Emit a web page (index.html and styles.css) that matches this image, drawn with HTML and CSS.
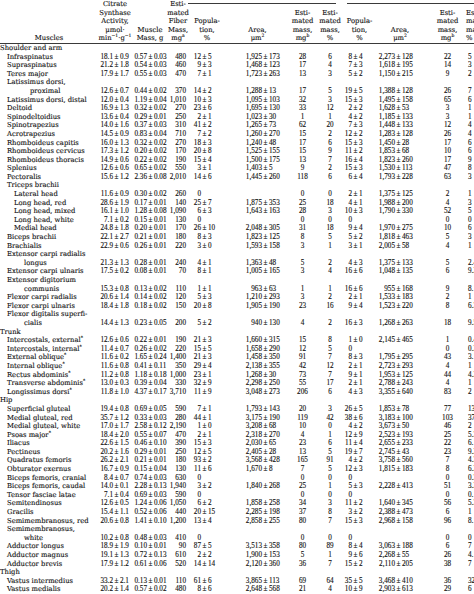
FILE: index.html
```html
<!DOCTYPE html>
<html>
<head>
<meta charset="utf-8">
<link rel="stylesheet" href="styles.css">
</head>
<body>
<table class="tbl">
<colgroup>
<col class="w1"><col class="w2"><col class="w3"><col class="w4"><col class="w5"><col class="w6"><col class="w7"><col class="w8"><col class="w9"><col class="w10"><col class="w11"><col class="w12">
</colgroup>
<thead>
<tr class="spanrow">
<th class="hd" rowspan="2"><div class="h"><span>Muscles</span></div></th>
<th class="hd" rowspan="2"><div class="h"><span>Citrate</span><span>Synthase</span><span>Activity,</span><span>μmol·</span><span>min<sup>−1</sup>·g<sup>−1</sup></span></div></th>
<th class="hd" rowspan="2"><div class="h"><span>Muscle</span><span>Mass, g</span></div></th>
<th class="hd" rowspan="2"><div class="h"><span>Esti-</span><span>mated</span><span>Fiber</span><span>Mass,</span><span>mg<sup>a</sup></span></div></th>
<th class="sp" colspan="4"><div class="rule r1"></div></th>
<th class="sp" colspan="4"><div class="rule r2"></div></th>
</tr>
<tr>
<th class="hd"><div class="h"><span>Popula-</span><span>tion,</span><span>%</span></div></th>
<th class="hd"><div class="h"><span>Area,</span><span>μm<sup>2</sup></span></div></th>
<th class="hd"><div class="h"><span>Esti-</span><span>mated</span><span>mass,</span><span>mg<sup>b</sup></span></div></th>
<th class="hd"><div class="h"><span>Esti-</span><span>mated</span><span>mass,</span><span>%</span></div></th>
<th class="hd"><div class="h"><span>Popula-</span><span>tion,</span><span>%</span></div></th>
<th class="hd"><div class="h"><span>Area,</span><span>μm<sup>2</sup></span></div></th>
<th class="hd h11"><div class="h"><span>Esti-</span><span>mated</span><span>mass,</span><span>mg<sup>b</sup></span></div></th>
<th class="hd h12"><div class="h"><span>Esti-</span><span>mated</span><span>mass,</span><span>%</span></div></th>
</tr>
</thead>
<tbody>
<tr><td class="sec" colspan="12">Shoulder and arm</td></tr>
<tr><td class="n">Infraspinatus</td><td class="c2"><span>18.1</span> ± 0.9</td><td class="c3"><span>0.57</span> ± 0.03</td><td class="c4">480</td><td class="c5"><span>12</span> ± 5</td><td class="c6"><span>1,925</span> ± 173</td><td class="c7">28</td><td class="c8">6</td><td class="c9"><span>8</span> ± 4</td><td class="c10"><span>2,273</span> ± 128</td><td class="c11">22</td><td class="c12">5</td></tr>
<tr><td class="n">Supraspinatus</td><td class="c2"><span>21.2</span> ± 1.8</td><td class="c3"><span>0.54</span> ± 0.03</td><td class="c4">460</td><td class="c5"><span>9</span> ± 3</td><td class="c6"><span>1,468</span> ± 123</td><td class="c7">17</td><td class="c8">4</td><td class="c9"><span>7</span> ± 3</td><td class="c10"><span>1,618</span> ± 195</td><td class="c11">14</td><td class="c12">3</td></tr>
<tr><td class="n">Teres major</td><td class="c2"><span>17.9</span> ± 1.7</td><td class="c3"><span>0.55</span> ± 0.03</td><td class="c4">470</td><td class="c5"><span>7</span> ± 1</td><td class="c6"><span>1,723</span> ± 263</td><td class="c7">13</td><td class="c8">3</td><td class="c9"><span>5</span> ± 2</td><td class="c10"><span>1,150</span> ± 215</td><td class="c11">9</td><td class="c12">2</td></tr>
<tr><td class="n">Latissimus dorsi,<br><span class="wr wp">proximal</span></td><td class="c2"><span>12.6</span> ± 0.7</td><td class="c3"><span>0.44</span> ± 0.02</td><td class="c4">370</td><td class="c5"><span>14</span> ± 2</td><td class="c6"><span>1,288</span> ± 13</td><td class="c7">17</td><td class="c8">5</td><td class="c9"><span>19</span> ± 5</td><td class="c10"><span>1,388</span> ± 128</td><td class="c11">26</td><td class="c12">7</td></tr>
<tr><td class="n">Latissimus dorsi, distal</td><td class="c2"><span>12.0</span> ± 0.4</td><td class="c3"><span>1.19</span> ± 0.04</td><td class="c4">1,010</td><td class="c5"><span>10</span> ± 3</td><td class="c6"><span>1,095</span> ± 103</td><td class="c7">32</td><td class="c8">3</td><td class="c9"><span>15</span> ± 3</td><td class="c10"><span>1,495</span> ± 158</td><td class="c11">65</td><td class="c12">6</td></tr>
<tr><td class="n">Deltoid</td><td class="c2"><span>16.9</span> ± 1.3</td><td class="c3"><span>0.32</span> ± 0.02</td><td class="c4">270</td><td class="c5"><span>23</span> ± 6</td><td class="c6"><span>1,695</span> ± 130</td><td class="c7">33</td><td class="c8">12</td><td class="c9"><span>2</span> ± 2</td><td class="c10"><span>1,628</span> ± 53</td><td class="c11">3</td><td class="c12">1</td></tr>
<tr><td class="n">Spinodeltoidius</td><td class="c2"><span>13.6</span> ± 0.4</td><td class="c3"><span>0.29</span> ± 0.01</td><td class="c4">250</td><td class="c5"><span>2</span> ± 1</td><td class="c6"><span>1,023</span> ± 30</td><td class="c7">1</td><td class="c8">1</td><td class="c9"><span>4</span> ± 2</td><td class="c10"><span>1,185</span> ± 133</td><td class="c11">3</td><td class="c12">1</td></tr>
<tr><td class="n">Spinotrapezius</td><td class="c2"><span>14.0</span> ± 1.6</td><td class="c3"><span>0.37</span> ± 0.03</td><td class="c4">310</td><td class="c5"><span>41</span> ± 2</td><td class="c6"><span>1,265</span> ± 73</td><td class="c7">62</td><td class="c8">20</td><td class="c9"><span>7</span> ± 3</td><td class="c10"><span>1,448</span> ± 133</td><td class="c11">12</td><td class="c12">4</td></tr>
<tr><td class="n">Acrotrapezius</td><td class="c2"><span>14.5</span> ± 0.9</td><td class="c3"><span>0.83</span> ± 0.04</td><td class="c4">710</td><td class="c5"><span>7</span> ± 2</td><td class="c6"><span>1,260</span> ± 270</td><td class="c7">15</td><td class="c8">2</td><td class="c9"><span>12</span> ± 2</td><td class="c10"><span>1,283</span> ± 128</td><td class="c11">26</td><td class="c12">4</td></tr>
<tr><td class="n">Rhomboideus capitis</td><td class="c2"><span>16.0</span> ± 1.3</td><td class="c3"><span>0.32</span> ± 0.02</td><td class="c4">270</td><td class="c5"><span>18</span> ± 3</td><td class="c6"><span>1,240</span> ± 48</td><td class="c7">17</td><td class="c8">6</td><td class="c9"><span>15</span> ± 3</td><td class="c10"><span>1,450</span> ± 28</td><td class="c11">17</td><td class="c12">6</td></tr>
<tr><td class="n">Rhomboideus cervicus</td><td class="c2"><span>17.3</span> ± 1.2</td><td class="c3"><span>0.20</span> ± 0.02</td><td class="c4">170</td><td class="c5"><span>20</span> ± 8</td><td class="c6"><span>1,525</span> ± 155</td><td class="c7">15</td><td class="c8">9</td><td class="c9"><span>11</span> ± 2</td><td class="c10"><span>1,853</span> ± 68</td><td class="c11">10</td><td class="c12">6</td></tr>
<tr><td class="n">Rhomboideus thoracis</td><td class="c2"><span>14.9</span> ± 0.6</td><td class="c3"><span>0.22</span> ± 0.02</td><td class="c4">190</td><td class="c5"><span>15</span> ± 4</td><td class="c6"><span>1,500</span> ± 175</td><td class="c7">13</td><td class="c8">7</td><td class="c9"><span>16</span> ± 4</td><td class="c10"><span>1,823</span> ± 260</td><td class="c11">17</td><td class="c12">9</td></tr>
<tr><td class="n">Splenius</td><td class="c2"><span>12.6</span> ± 0.6</td><td class="c3"><span>0.65</span> ± 0.02</td><td class="c4">550</td><td class="c5"><span>3</span> ± 1</td><td class="c6"><span>1,403</span> ± 5</td><td class="c7">9</td><td class="c8">2</td><td class="c9"><span>15</span> ± 3</td><td class="c10"><span>1,530</span> ± 113</td><td class="c11">47</td><td class="c12">8</td></tr>
<tr><td class="n">Pectoralis</td><td class="c2"><span>15.6</span> ± 1.2</td><td class="c3"><span>2.36</span> ± 0.08</td><td class="c4">2,010</td><td class="c5"><span>14</span> ± 6</td><td class="c6"><span>1,445</span> ± 260</td><td class="c7">118</td><td class="c8">6</td><td class="c9"><span>6</span> ± 4</td><td class="c10"><span>1,793</span> ± 228</td><td class="c11">63</td><td class="c12">3</td></tr>
<tr><td class="n" colspan="12">Triceps brachii</td></tr>
<tr><td class="n2">Lateral head</td><td class="c2"><span>11.6</span> ± 0.9</td><td class="c3"><span>0.30</span> ± 0.02</td><td class="c4">260</td><td class="c5"><span>0</span></td><td class="c6"></td><td class="c7">0</td><td class="c8">0</td><td class="c9"><span>2</span> ± 1</td><td class="c10"><span>1,375</span> ± 125</td><td class="c11">2</td><td class="c12">1</td></tr>
<tr><td class="n2">Long head, red</td><td class="c2"><span>28.6</span> ± 1.9</td><td class="c3"><span>0.17</span> ± 0.01</td><td class="c4">140</td><td class="c5"><span>25</span> ± 7</td><td class="c6"><span>1,875</span> ± 353</td><td class="c7">25</td><td class="c8">18</td><td class="c9"><span>4</span> ± 1</td><td class="c10"><span>1,988</span> ± 200</td><td class="c11">4</td><td class="c12">3</td></tr>
<tr><td class="n2">Long head, mixed</td><td class="c2"><span>16.1</span> ± 1.0</td><td class="c3"><span>1.28</span> ± 0.08</td><td class="c4">1,090</td><td class="c5"><span>6</span> ± 3</td><td class="c6"><span>1,643</span> ± 163</td><td class="c7">28</td><td class="c8">3</td><td class="c9"><span>10</span> ± 3</td><td class="c10"><span>1,790</span> ± 330</td><td class="c11">52</td><td class="c12">5</td></tr>
<tr><td class="n2">Long head, white</td><td class="c2"><span>7.1</span> ± 0.2</td><td class="c3"><span>0.15</span> ± 0.01</td><td class="c4">130</td><td class="c5"><span>0</span></td><td class="c6"></td><td class="c7">0</td><td class="c8">0</td><td class="c9"><span>0</span></td><td class="c10"></td><td class="c11">0</td><td class="c12">0</td></tr>
<tr><td class="n2">Medial head</td><td class="c2"><span>24.8</span> ± 1.8</td><td class="c3"><span>0.20</span> ± 0.01</td><td class="c4">170</td><td class="c5"><span>26</span> ± 10</td><td class="c6"><span>2,048</span> ± 305</td><td class="c7">31</td><td class="c8">18</td><td class="c9"><span>9</span> ± 4</td><td class="c10"><span>1,970</span> ± 275</td><td class="c11">10</td><td class="c12">6</td></tr>
<tr><td class="n">Biceps brachii</td><td class="c2"><span>22.1</span> ± 2.7</td><td class="c3"><span>0.21</span> ± 0.01</td><td class="c4">180</td><td class="c5"><span>8</span> ± 3</td><td class="c6"><span>1,823</span> ± 125</td><td class="c7">8</td><td class="c8">5</td><td class="c9"><span>5</span> ± 2</td><td class="c10"><span>1,818</span> ± 463</td><td class="c11">5</td><td class="c12">3</td></tr>
<tr><td class="n">Brachialis</td><td class="c2"><span>22.9</span> ± 0.6</td><td class="c3"><span>0.26</span> ± 0.01</td><td class="c4">220</td><td class="c5"><span>3</span> ± 0</td><td class="c6"><span>1,593</span> ± 158</td><td class="c7">3</td><td class="c8">1</td><td class="c9"><span>3</span> ± 1</td><td class="c10"><span>2,005</span> ± 58</td><td class="c11">4</td><td class="c12">1</td></tr>
<tr><td class="n">Extensor carpi radialis<br><span class="wr">longus</span></td><td class="c2"><span>21.3</span> ± 1.3</td><td class="c3"><span>0.28</span> ± 0.01</td><td class="c4">240</td><td class="c5"><span>4</span> ± 1</td><td class="c6"><span>1,363</span> ± 48</td><td class="c7">5</td><td class="c8">2</td><td class="c9"><span>4</span> ± 3</td><td class="c10"><span>1,375</span> ± 133</td><td class="c11">5</td><td class="c12">2.4</td></tr>
<tr><td class="n">Extensor carpi ulnaris</td><td class="c2"><span>17.5</span> ± 0.2</td><td class="c3"><span>0.08</span> ± 0.01</td><td class="c4">70</td><td class="c5"><span>8</span> ± 1</td><td class="c6"><span>1,005</span> ± 165</td><td class="c7">3</td><td class="c8">4</td><td class="c9"><span>16</span> ± 6</td><td class="c10"><span>1,048</span> ± 135</td><td class="c11">6</td><td class="c12">9.2</td></tr>
<tr><td class="n">Extensor digitorium<br><span class="wr">communis</span></td><td class="c2"><span>15.3</span> ± 0.8</td><td class="c3"><span>0.13</span> ± 0.02</td><td class="c4">110</td><td class="c5"><span>1</span> ± 1</td><td class="c6"><span>963</span> ± 63</td><td class="c7">1</td><td class="c8">1</td><td class="c9"><span>16</span> ± 6</td><td class="c10"><span>955</span> ± 168</td><td class="c11">9</td><td class="c12">8.1</td></tr>
<tr><td class="n">Flexor carpi radialis</td><td class="c2"><span>20.6</span> ± 1.4</td><td class="c3"><span>0.14</span> ± 0.02</td><td class="c4">120</td><td class="c5"><span>5</span> ± 3</td><td class="c6"><span>1,210</span> ± 293</td><td class="c7">3</td><td class="c8">2</td><td class="c9"><span>2</span> ± 1</td><td class="c10"><span>1,533</span> ± 183</td><td class="c11">2</td><td class="c12">1</td></tr>
<tr><td class="n">Flexor carpi ulnaris</td><td class="c2"><span>18.4</span> ± 1.8</td><td class="c3"><span>0.18</span> ± 0.02</td><td class="c4">150</td><td class="c5"><span>20</span> ± 8</td><td class="c6"><span>1,905</span> ± 190</td><td class="c7">23</td><td class="c8">16</td><td class="c9"><span>9</span> ± 4</td><td class="c10"><span>1,523</span> ± 220</td><td class="c11">8</td><td class="c12">6.3</td></tr>
<tr><td class="n">Flexor digitalis superfi-<br><span class="wr">cialis</span></td><td class="c2"><span>14.4</span> ± 1.3</td><td class="c3"><span>0.23</span> ± 0.05</td><td class="c4">200</td><td class="c5"><span>5</span> ± 2</td><td class="c6"><span>940</span> ± 130</td><td class="c7">4</td><td class="c8">2</td><td class="c9"><span>16</span> ± 3</td><td class="c10"><span>1,268</span> ± 263</td><td class="c11">18</td><td class="c12">9.5</td></tr>
<tr><td class="sec" colspan="12">Trunk</td></tr>
<tr><td class="n">Intercostals, external<sup>*</sup></td><td class="c2"><span>12.6</span> ± 0.6</td><td class="c3"><span>0.22</span> ± 0.01</td><td class="c4">190</td><td class="c5"><span>21</span> ± 3</td><td class="c6"><span>1,660</span> ± 315</td><td class="c7">15</td><td class="c8">8</td><td class="c9"><span>1</span> ± 0</td><td class="c10"><span>2,145</span> ± 465</td><td class="c11">1</td><td class="c12">0.4</td></tr>
<tr><td class="n">Intercostals, internal<sup>*</sup></td><td class="c2"><span>11.4</span> ± 0.7</td><td class="c3"><span>0.26</span> ± 0.02</td><td class="c4">220</td><td class="c5"><span>15</span> ± 5</td><td class="c6"><span>1,658</span> ± 290</td><td class="c7">12</td><td class="c8">5</td><td class="c9"><span>0</span></td><td class="c10"></td><td class="c11">0</td><td class="c12">0.2</td></tr>
<tr><td class="n">External oblique<sup>*</sup></td><td class="c2"><span>11.6</span> ± 0.2</td><td class="c3"><span>1.65</span> ± 0.24</td><td class="c4">1,400</td><td class="c5"><span>21</span> ± 3</td><td class="c6"><span>1,458</span> ± 350</td><td class="c7">91</td><td class="c8">7</td><td class="c9"><span>8</span> ± 3</td><td class="c10"><span>1,795</span> ± 295</td><td class="c11">43</td><td class="c12">3.1</td></tr>
<tr><td class="n">Internal oblique<sup>*</sup></td><td class="c2"><span>11.6</span> ± 0.8</td><td class="c3"><span>0.41</span> ± 0.11</td><td class="c4">350</td><td class="c5"><span>29</span> ± 4</td><td class="c6"><span>2,138</span> ± 355</td><td class="c7">42</td><td class="c8">12</td><td class="c9"><span>2</span> ± 1</td><td class="c10"><span>2,723</span> ± 293</td><td class="c11">4</td><td class="c12">1</td></tr>
<tr><td class="n">Rectus abdominis<sup>*</sup></td><td class="c2"><span>11.2</span> ± 0.8</td><td class="c3"><span>1.18</span> ± 0.18</td><td class="c4">1,000</td><td class="c5"><span>23</span> ± 1</td><td class="c6"><span>1,268</span> ± 30</td><td class="c7">73</td><td class="c8">7</td><td class="c9"><span>9</span> ± 1</td><td class="c10"><span>1,953</span> ± 125</td><td class="c11">44</td><td class="c12">4.2</td></tr>
<tr><td class="n">Transverse abdominis<sup>*</sup></td><td class="c2"><span>13.0</span> ± 0.3</td><td class="c3"><span>0.39</span> ± 0.04</td><td class="c4">330</td><td class="c5"><span>32</span> ± 9</td><td class="c6"><span>2,298</span> ± 250</td><td class="c7">55</td><td class="c8">17</td><td class="c9"><span>2</span> ± 1</td><td class="c10"><span>2,788</span> ± 243</td><td class="c11">4</td><td class="c12">1</td></tr>
<tr><td class="n">Longissimus dorsi<sup>*</sup></td><td class="c2"><span>11.8</span> ± 1.0</td><td class="c3"><span>4.37</span> ± 0.17</td><td class="c4">3,710</td><td class="c5"><span>11</span> ± 9</td><td class="c6"><span>3,048</span> ± 273</td><td class="c7">206</td><td class="c8">6</td><td class="c9"><span>4</span> ± 3</td><td class="c10"><span>3,355</span> ± 640</td><td class="c11">83</td><td class="c12">2</td></tr>
<tr><td class="sec" colspan="12">Hip</td></tr>
<tr><td class="n">Superficial gluteal</td><td class="c2"><span>19.4</span> ± 0.8</td><td class="c3"><span>0.69</span> ± 0.05</td><td class="c4">590</td><td class="c5"><span>7</span> ± 1</td><td class="c6"><span>1,793</span> ± 143</td><td class="c7">20</td><td class="c8">3</td><td class="c9"><span>26</span> ± 5</td><td class="c10"><span>1,853</span> ± 78</td><td class="c11">77</td><td class="c12">13</td></tr>
<tr><td class="n">Medial gluteal, red</td><td class="c2"><span>35.7</span> ± 1.2</td><td class="c3"><span>0.33</span> ± 0.03</td><td class="c4">280</td><td class="c5"><span>44</span> ± 1</td><td class="c6"><span>3,175</span> ± 190</td><td class="c7">119</td><td class="c8">42</td><td class="c9"><span>38</span> ± 6</td><td class="c10"><span>3,183</span> ± 100</td><td class="c11">103</td><td class="c12">37</td></tr>
<tr><td class="n">Medial gluteal, white</td><td class="c2"><span>17.0</span> ± 1.7</td><td class="c3"><span>2.58</span> ± 0.12</td><td class="c4">2,190</td><td class="c5"><span>1</span> ± 0</td><td class="c6"><span>3,208</span> ± 68</td><td class="c7">10</td><td class="c8">0</td><td class="c9"><span>4</span> ± 2</td><td class="c10"><span>3,673</span> ± 50</td><td class="c11">46</td><td class="c12">2</td></tr>
<tr><td class="n">Psoas major<sup>*</sup></td><td class="c2"><span>18.4</span> ± 2.0</td><td class="c3"><span>0.55</span> ± 0.07</td><td class="c4">470</td><td class="c5"><span>2</span> ± 1</td><td class="c6"><span>2,318</span> ± 270</td><td class="c7">4</td><td class="c8">1</td><td class="c9"><span>12</span> ± 9</td><td class="c10"><span>2,523</span> ± 193</td><td class="c11">25</td><td class="c12">5.3</td></tr>
<tr><td class="n">Iliacus</td><td class="c2"><span>22.6</span> ± 1.5</td><td class="c3"><span>0.46</span> ± 0.10</td><td class="c4">390</td><td class="c5"><span>15</span> ± 3</td><td class="c6"><span>2,030</span> ± 65</td><td class="c7">23</td><td class="c8">6</td><td class="c9"><span>11</span> ± 4</td><td class="c10"><span>2,655</span> ± 233</td><td class="c11">22</td><td class="c12">6.1</td></tr>
<tr><td class="n">Pectineus</td><td class="c2"><span>20.2</span> ± 1.6</td><td class="c3"><span>0.29</span> ± 0.01</td><td class="c4">250</td><td class="c5"><span>12</span> ± 5</td><td class="c6"><span>2,405</span> ± 28</td><td class="c7">13</td><td class="c8">5</td><td class="c9"><span>19</span> ± 7</td><td class="c10"><span>2,745</span> ± 43</td><td class="c11">23</td><td class="c12">9.2</td></tr>
<tr><td class="n">Quadratus femoris</td><td class="c2"><span>26.2</span> ± 2.1</td><td class="c3"><span>0.21</span> ± 0.01</td><td class="c4">180</td><td class="c5"><span>93</span> ± 2</td><td class="c6"><span>3,568</span> ± 428</td><td class="c7">165</td><td class="c8">91</td><td class="c9"><span>4</span> ± 2</td><td class="c10"><span>3,758</span> ± 560</td><td class="c11">7</td><td class="c12">4.3</td></tr>
<tr><td class="n">Obturator exernus</td><td class="c2"><span>16.7</span> ± 0.9</td><td class="c3"><span>0.15</span> ± 0.04</td><td class="c4">130</td><td class="c5"><span>11</span> ± 6</td><td class="c6"><span>1,670</span> ± 8</td><td class="c7">7</td><td class="c8">5</td><td class="c9"><span>12</span> ± 3</td><td class="c10"><span>1,815</span> ± 183</td><td class="c11">8</td><td class="c12">6.2</td></tr>
<tr><td class="n">Biceps femoris, cranial</td><td class="c2"><span>8.4</span> ± 0.7</td><td class="c3"><span>0.74</span> ± 0.03</td><td class="c4">630</td><td class="c5"><span>0</span></td><td class="c6"></td><td class="c7">0</td><td class="c8">0</td><td class="c9"><span>0</span></td><td class="c10"></td><td class="c11">0</td><td class="c12">0.3</td></tr>
<tr><td class="n">Biceps femoris, caudal</td><td class="c2"><span>14.0</span> ± 0.1</td><td class="c3"><span>2.28</span> ± 0.13</td><td class="c4">1,940</td><td class="c5"><span>3</span> ± 2</td><td class="c6"><span>1,840</span> ± 268</td><td class="c7">25</td><td class="c8">1</td><td class="c9"><span>5</span> ± 3</td><td class="c10"><span>2,228</span> ± 413</td><td class="c11">51</td><td class="c12">3.2</td></tr>
<tr><td class="n">Tensor fasciae latae</td><td class="c2"><span>7.1</span> ± 0.4</td><td class="c3"><span>0.69</span> ± 0.03</td><td class="c4">590</td><td class="c5"><span>0</span></td><td class="c6"></td><td class="c7">0</td><td class="c8">0</td><td class="c9"><span>0</span></td><td class="c10"></td><td class="c11">0</td><td class="c12">0.1</td></tr>
<tr><td class="n">Semitendinosus</td><td class="c2"><span>12.6</span> ± 0.5</td><td class="c3"><span>1.24</span> ± 0.06</td><td class="c4">1,050</td><td class="c5"><span>6</span> ± 2</td><td class="c6"><span>1,858</span> ± 258</td><td class="c7">34</td><td class="c8">3</td><td class="c9"><span>11</span> ± 2</td><td class="c10"><span>1,640</span> ± 345</td><td class="c11">56</td><td class="c12">5.3</td></tr>
<tr><td class="n">Gracilis</td><td class="c2"><span>15.4</span> ± 1.1</td><td class="c3"><span>0.52</span> ± 0.06</td><td class="c4">440</td><td class="c5"><span>20</span> ± 15</td><td class="c6"><span>2,285</span> ± 198</td><td class="c7">37</td><td class="c8">8</td><td class="c9"><span>3</span> ± 2</td><td class="c10"><span>2,388</span> ± 473</td><td class="c11">6</td><td class="c12">1</td></tr>
<tr><td class="n">Semimembranosus, red</td><td class="c2"><span>20.6</span> ± 0.8</td><td class="c3"><span>1.41</span> ± 0.10</td><td class="c4">1,200</td><td class="c5"><span>13</span> ± 4</td><td class="c6"><span>2,858</span> ± 255</td><td class="c7">80</td><td class="c8">7</td><td class="c9"><span>15</span> ± 3</td><td class="c10"><span>2,968</span> ± 158</td><td class="c11">96</td><td class="c12">8.1</td></tr>
<tr><td class="n">Semimembranosus,<br><span class="wr">white</span></td><td class="c2"><span>10.2</span> ± 0.8</td><td class="c3"><span>0.48</span> ± 0.03</td><td class="c4">410</td><td class="c5"><span>0</span></td><td class="c6"></td><td class="c7">0</td><td class="c8">0</td><td class="c9"><span>0</span></td><td class="c10"></td><td class="c11">0</td><td class="c12">0</td></tr>
<tr><td class="n">Adductor longus</td><td class="c2"><span>18.9</span> ± 1.9</td><td class="c3"><span>0.10</span> ± 0.01</td><td class="c4">90</td><td class="c5"><span>87</span> ± 5</td><td class="c6"><span>3,513</span> ± 358</td><td class="c7">80</td><td class="c8">89</td><td class="c9"><span>8</span> ± 4</td><td class="c10"><span>3,063</span> ± 188</td><td class="c11">6</td><td class="c12">7</td></tr>
<tr><td class="n">Adductor magnus</td><td class="c2"><span>19.1</span> ± 1.3</td><td class="c3"><span>0.72</span> ± 0.13</td><td class="c4">610</td><td class="c5"><span>2</span> ± 2</td><td class="c6"><span>1,900</span> ± 153</td><td class="c7">5</td><td class="c8">1</td><td class="c9"><span>9</span> ± 6</td><td class="c10"><span>2,268</span> ± 55</td><td class="c11">26</td><td class="c12">4.1</td></tr>
<tr><td class="n">Adductor brevis</td><td class="c2"><span>17.9</span> ± 1.2</td><td class="c3"><span>0.61</span> ± 0.06</td><td class="c4">520</td><td class="c5"><span>14</span> ± 14</td><td class="c6"><span>2,120</span> ± 360</td><td class="c7">36</td><td class="c8">7</td><td class="c9"><span>15</span> ± 2</td><td class="c10"><span>2,110</span> ± 205</td><td class="c11">38</td><td class="c12">7</td></tr>
<tr><td class="sec" colspan="12">Thigh</td></tr>
<tr><td class="n">Vastus intermedius</td><td class="c2"><span>33.2</span> ± 2.1</td><td class="c3"><span>0.13</span> ± 0.01</td><td class="c4">110</td><td class="c5"><span>61</span> ± 6</td><td class="c6"><span>3,865</span> ± 113</td><td class="c7">69</td><td class="c8">64</td><td class="c9"><span>35</span> ± 5</td><td class="c10"><span>3,468</span> ± 410</td><td class="c11">36</td><td class="c12">32</td></tr>
<tr><td class="n">Vastus medialis</td><td class="c2"><span>20.2</span> ± 1.4</td><td class="c3"><span>0.57</span> ± 0.02</td><td class="c4">480</td><td class="c5"><span>8</span> ± 6</td><td class="c6"><span>2,648</span> ± 568</td><td class="c7">21</td><td class="c8">4</td><td class="c9"><span>10</span> ± 9</td><td class="c10"><span>2,903</span> ± 613</td><td class="c11">29</td><td class="c12">6</td></tr>
</tbody>
</table>
</body>
</html>
```
FILE: styles.css
```css
html, body {
  margin: 0;
  padding: 0;
  background: #ffffff;
  overflow: hidden;
}
body {
  width: 474px;
  height: 594px;
  font-family: "DejaVu Serif", "Liberation Serif", serif;
  font-size: 6.8px;
  color: #111111;
  -webkit-text-stroke: 0.12px #111111;
}
.tbl {
  table-layout: fixed;
  width: 500px;
  border-collapse: collapse;
  border-spacing: 0;
}
.w1 { width: 98px; }
.w2 { width: 34px; }
.w3 { width: 36px; }
.w4 { width: 20px; }
.w5 { width: 38px; }
.w6 { width: 63px; }
.w7 { width: 27px; }
.w8 { width: 28px; }
.w9 { width: 31px; }
.w10 { width: 50px; }
.w11 { width: 35px; }
.w12 { width: 40px; }

th, td {
  padding: 0;
  white-space: nowrap;
  font-weight: normal;
}
td {
  line-height: 8.6px;
  vertical-align: bottom;
  text-align: left;
}
.spanrow > th.sp {
  height: 4px;
  vertical-align: bottom;
  line-height: 0;
  font-size: 0;
}
.rule {
  border-bottom: 1px solid #3a3a3a;
}
.r1 { margin: 0 8px 0 0; }
.r2 { margin: 0 0 0 3px; }

th.hd {
  vertical-align: bottom;
  line-height: 8.6px;
  border-bottom: 1px solid #3a3a3a;
}
.h {
  display: flex;
  flex-direction: column;
  align-items: center;
}
.h11 .h { padding-left: 10px; }
.h12 .h { padding-left: 6px; align-items: flex-start; }
sup {
  font-size: 4.5px;
  line-height: 0;
  vertical-align: 3px;
}

.sec { padding-left: 0; }
.n { padding-left: 7px; }
.n2 { padding-left: 14px; }
.wr { padding-left: 17px; }
.wp { padding-left: 23px; }

.c2, .c3, .c4, .c5, .c6, .c7, .c8, .c9, .c10, .c11, .c12 {
  font-family: "Liberation Serif", "Times New Roman", serif;
  font-size: 7.2px;
  word-spacing: -0.3px;
}
.c2 span, .c3 span, .c5 span, .c6 span, .c9 span, .c10 span {
  display: inline-block;
  text-align: right;
}
.c2 { padding-left: 2px; }
.c2 span { width: 13px; }
.c3 { padding-left: 2px; }
.c3 span { width: 13px; }
.c4 { text-align: right; padding-right: 2px; }
.c5 span { width: 13px; }
.c6 span { width: 36px; }
.c7, .c8 { text-align: center; }
.c9 span { width: 8px; }
.c10 span { width: 20px; }
.c11 { text-align: center; padding-left: 10px; }
.c12 { padding-left: 8px; }
```
